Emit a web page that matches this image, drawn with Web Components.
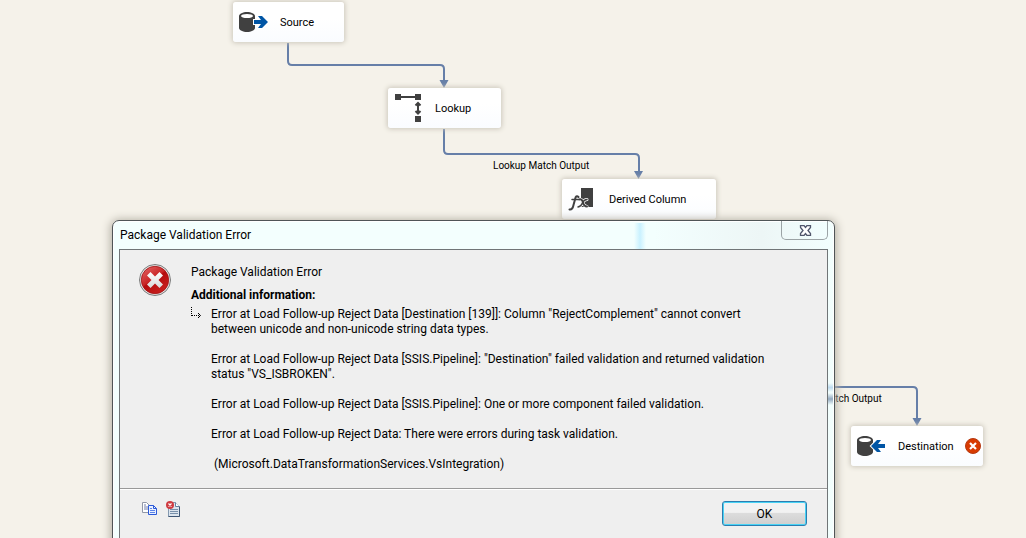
<!DOCTYPE html>
<html lang="en">
<head>
<meta charset="utf-8">
<title>Data Flow - Package Validation Error</title>
<style>
  html, body { height: 100%; }
  body { margin: 0; overflow: hidden; background: #f5f2ea; color: #000; font-family: Roboto, "Noto Sans", sans-serif; font-size: 12px; }
</style>
</head>
<body>
<data-flow-canvas>
  <flow-node style="left:233px;top:2px;width:111px" icon="source">Source</flow-node>
  <flow-node style="left:388px;top:88px;width:113px" icon="lookup">Lookup</flow-node>
  <flow-node style="left:562px;top:179px;width:154px" icon="derived">Derived Column</flow-node>
  <flow-node style="left:851px;top:426px;width:132px" icon="destination" invalid>Destination</flow-node>
  <flow-label style="left:493px;top:159px">Lookup Match Output</flow-label>
  <flow-label style="left:821px;top:392px">Match Output</flow-label>
  <error-dialog caption="Package Validation Error">
    <validation-message slot="message"></validation-message>
  </error-dialog>
</data-flow-canvas>

<script>
function define(name, html, setup) {
  const template = document.createElement('template');
  template.innerHTML = html;
  customElements.define(name, class extends HTMLElement {
    constructor() {
      super();
      this.attachShadow({ mode: 'open' }).append(template.content.cloneNode(true));
    }
    connectedCallback() { if (setup) setup(this, this.shadowRoot); }
  });
}

define('data-flow-canvas', `
  <style>
    :host { display: block; position: relative; height: 100%; overflow: hidden; }
    svg { position: absolute; left: 0; top: 0; overflow: visible; }
  </style>
  <svg width="1" height="1" fill="none" stroke="#667fa8" stroke-width="2" aria-hidden="true">
    <path d="M288 43V61q0 4 4 4H440q4 0 4 4V82"/>
    <path d="M444 129V150q0 4 4 4H635q4 0 4 4V173"/>
    <path d="M639 220V383q0 4 4 4H913q4 0 4 4V420"/>
    <path d="M439.500 80h9l-4.500 8zM634 171h9l-4.500 8zM912.500 418h9l-4.500 8z" fill="#667fa8" stroke="none"/>
  </svg>
  <slot></slot>`);

const barrel = `<path d="M0 4v12c0 2 4 4 8 4s8-2 8-4V4c0-2-4-4-8-4S0 2 0 4z" fill="#404040"/><ellipse cx="8" cy="4" rx="6" ry="2" fill="#fff"/>`;
const nodeIcons = {
  source: `<g transform="translate(2 7)">${barrel}<path d="M15 8h7l-3-4h4l6 6-6 6h-4l3-4h-7z" fill="#0055a5" stroke="#fff" stroke-width="2" paint-order="stroke"/></g>`,
  lookup: `<path d="M3 3h6v6H3zM23 3h6v6h-6zM23 25h6v6h-6zM9 5h14v2H9z" fill="#404040"/><path d="M26 12v10M23.500 14.500L26 12l2.500 2.500M23.500 20L26 22.500l2.500-2.500" fill="none" stroke="#404040" stroke-width="2"/>`,
  derived: `<g transform="translate(1 1)" fill="none" stroke-linecap="round"><path d="M14 5h12v19H14z" fill="#404040"/><g stroke="#fff" stroke-width="3"><path d="M12 16.500q3-1 4 3t4 4M20 16.500q-3 0-4.500 3.500T11 24"/></g><g stroke="#404040"><path d="M11.500 14Q9 11.500 8 16.500L6.500 22Q5.500 27 2.500 26.500" stroke-width="2"/><path d="M5 16.500h6" stroke-width="1.500"/><path d="M12 16.500q3-1 4 3t4 4" stroke-width="2"/><path d="M20 16.500q-3 0-4.500 3.500T11 24" stroke-width="1.500"/></g></g>`,
  destination: `<g transform="translate(2 7)">${barrel}<path d="M28 8h-7l3-4h-4l-6 6 6 6h4l-3-4h7z" fill="#0055a5" stroke="#fff" stroke-width="2" paint-order="stroke"/></g>`
};

define('flow-node', `
  <style>
    :host { position: absolute; box-sizing: border-box; height: 40px; display: flex; align-items: center;
      padding: 0 4px; gap: 11px; border-radius: 3px; background: linear-gradient(#fff 40%, #fafcff);
      box-shadow: 0 0 5px 1px #cbc7bb; font-size: 11px; line-height: 16px; white-space: nowrap; }
    svg { flex: none; }
    span { padding-top: 2px; }
    .status { display: none; margin-left: auto; }
    :host([invalid]) .status { display: block; }
  </style>
  <svg class="icon" width="32" height="34" viewBox="0 0 32 34" aria-hidden="true"></svg>
  <span><slot></slot></span>
  <svg class="status" width="16" height="16" viewBox="0 0 16 16" role="img" aria-label="Error">
    <circle cx="8" cy="8" r="7.500" fill="#d83b01" stroke="#b63a12"/>
    <path d="M5 5l6 6M11 5l-6 6" stroke="#fff" stroke-width="2.200"/>
  </svg>`, (host, root) => {
  root.querySelector('.icon').innerHTML = nodeIcons[host.getAttribute('icon')];
});

define('flow-label', `
  <style>
    :host { position: absolute; font-size: 10px; line-height: 13px; white-space: nowrap; }
  </style><slot></slot>`);

define('validation-message', `
  <style>
    :host { display: grid; grid-template-columns: 32px 1fr; column-gap: 20px; padding: 14px 20px 16px 19px; line-height: 15px; }
    .text { padding-top: 1px; }
    h1 { margin: 0 0 8px; font: inherit; }
    h2 { margin: 0 0 4px; font-size: 12px; line-height: 15px; }
    .details { display: grid; grid-template-columns: 12px 1fr; column-gap: 8px; }
    p { margin: 0 0 15px; }
    p:last-child { margin: 0; padding-left: 3px; }
  </style>
  <svg width="32" height="32" viewBox="0 0 32 32" role="img" aria-label="Error">
    <defs><linearGradient id="r" x1="0" y1="0" x2="0.700" y2="1"><stop offset="0" stop-color="#e66a6a"/><stop offset=".5" stop-color="#c92526"/><stop offset=".55" stop-color="#b50b0d"/><stop offset="1" stop-color="#c9201f"/></linearGradient>
    <linearGradient id="w" x1="0" y1="0" x2="0" y2="1"><stop offset="0" stop-color="#fff"/><stop offset="1" stop-color="#d8d8d8"/></linearGradient></defs>
    <circle cx="16" cy="16" r="15.500" fill="#e5e5e5" stroke="#7b7b7b"/>
    <circle cx="16" cy="16" r="13.700" fill="url(#r)" stroke="#a11214" stroke-width=".8"/>
    <path d="M11.500 8l4.500 4.500L20.500 8l3.500 3.500-4.500 4.500 4.500 4.500-3.500 3.500-4.500-4.500-4.500 4.500L8 20.500l4.500-4.500L8 11.500z" fill="url(#w)"/>
  </svg>
  <div class="text">
    <h1>Package Validation Error</h1>
    <h2>Additional information:</h2>
    <div class="details">
      <svg width="12" height="15" aria-hidden="true"><path d="M.5 0v9M1 8.500h7" fill="none" stroke="#000" stroke-dasharray="1 1"/><path d="M7 6l2.500 2.500L7 11" fill="none" stroke="#000"/></svg>
      <div>
        <p>Error at Load Follow-up Reject Data [Destination [139]]: Column "RejectComplement" cannot convert<br>between unicode and non-unicode string data types.</p>
        <p>Error at Load Follow-up Reject Data [SSIS.Pipeline]: "Destination" failed validation and returned validation<br>status "VS_ISBROKEN".</p>
        <p>Error at Load Follow-up Reject Data [SSIS.Pipeline]: One or more component failed validation.</p>
        <p>Error at Load Follow-up Reject Data: There were errors during task validation.</p>
        <p>(Microsoft.DataTransformationServices.VsIntegration)</p>
      </div>
    </div>
  </div>`);

define('error-dialog', `
  <style>
    :host { position: absolute; left: 112px; top: 220px; width: 723px; box-sizing: border-box; display: block;
      border: 1px solid #4f5557; border-radius: 7px 7px 0 0; padding: 0 6px 7px;
      background:
        linear-gradient(90deg, transparent, #c9f1ff, transparent) 521px 2px / 12px 26px no-repeat,
        linear-gradient(transparent, #bfdcf0, transparent) 715px 162px / 6px 9px no-repeat,
        linear-gradient(transparent, #93a9bf, transparent) 715px 172px / 6px 12px no-repeat,
        linear-gradient(90deg, #f3fffe 0 75%, #edf6f6 90%, #f2fffe);
      box-shadow: inset 0 0 0 1px #fff, 0 1px 9px 2px #b9b5aa; }
    header { display: flex; height: 28px; justify-content: space-between; }
    .caption { padding: 6px 0 0 1px; line-height: 16px; }
    .close { box-sizing: border-box; width: 47px; height: 19px; padding: 0 0 0 2px; border: 1px solid #9ba3a5; border-top: 0;
      border-radius: 0 0 5px 5px; background: transparent; display: grid; place-items: center; }
    .window { border: 1px solid #707577; background: #efefef; }
    footer { display: flex; align-items: flex-start; gap: 8px; padding: 12px 20px 16px 22px; border-top: 1px solid #999; box-shadow: inset 0 1px #fff; }
    .tool { width: 16px; height: 16px; padding: 0; border: 0; background: none; }
    .tool svg { display: block; }
    .ok { box-sizing: border-box; width: 85px; height: 25px; margin-left: auto; padding: 0; border: 1px solid #2c7db0;
      border-radius: 3px; background: linear-gradient(#f2f2f2 0 45%, #dcdcdc 50%, #cfcfcf); box-shadow: inset 0 0 0 1px #48d3f5;
      color: #000; font: inherit; }
  </style>
  <header>
    <span class="caption"></span>
    <button class="close" aria-label="Close"><svg width="13" height="11" viewBox="0 0 13 11"><path d="M1.500.5h3.500l1.500 2 1.500-2h3.500v2L9 5.500l2.500 3v2H8l-1.500-2-1.500 2H1.500v-2L4 5.500l-2.500-3z" fill="#fff" stroke="#50566b" stroke-width="1.300"/></svg></button>
  </header>
  <div class="window" role="dialog" aria-label="Package Validation Error">
    <slot name="message"></slot>
    <footer>
      <button class="tool" aria-label="Copy message text"><svg width="16" height="16" viewBox="0 0 16 16">
        <path d="M.5 1.500h4l3 3v7h-7z" fill="#fff" stroke="#9298a8"/><path d="M2 4h2M2 6h4M2 8h4" stroke="#727eac"/>
        <path d="M6.500 4.500h5l3 3v6h-8z" fill="#e9f0ff" stroke="#2b59d8"/><path d="M11.500 4.500v3h3" fill="none" stroke="#2b59d8"/><path d="M8 7.500h2M8 9.500h5M8 11.500h5" stroke="#5b83e8"/></svg></button>
      <button class="tool" aria-label="Show technical details"><svg width="16" height="16" viewBox="0 0 16 16">
        <path d="M2.500 1.500h7l4 4v10h-11z" fill="#dce5ee" stroke="#8499b0"/><path d="M13.500 5.500v10h-11" fill="none" stroke="#3e5675"/><path d="M9.500 1.500v4h4" fill="#fff" stroke="#66809c"/><path d="M4 8.500h8M4 10.500h8M4 12.500h8" stroke="#7890ab"/>
        <circle cx="4" cy="4" r="4" fill="#cf3a40"/><path d="M2.500 2.500l3 3M5.500 2.500l-3 3" stroke="#fff" stroke-width="1.200"/></svg></button>
      <button class="ok">OK</button>
    </footer>
  </div>`, (host, root) => {
  root.querySelector('.caption').textContent = host.getAttribute('caption');
});
</script>
</body>
</html>
